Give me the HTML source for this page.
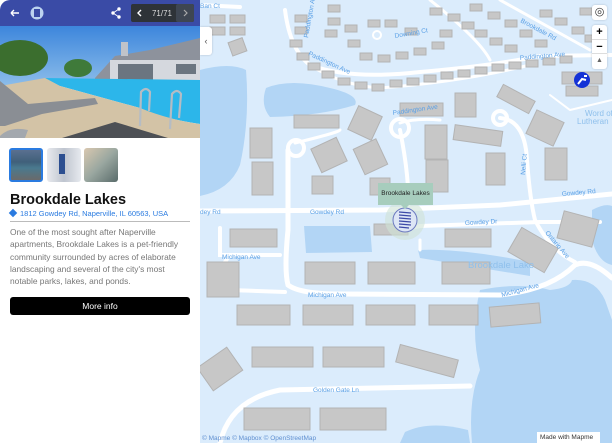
<!DOCTYPE html>
<html><head><meta charset="utf-8"><style>
*{margin:0;padding:0;box-sizing:border-box}
body{width:612px;height:443px;overflow:hidden;font-family:"Liberation Sans",sans-serif;background:#fff;position:relative}
#panel{position:absolute;left:0;top:0;width:200px;height:443px;background:#fff;z-index:2}
#hdr{position:absolute;left:0;top:0;width:200px;height:26px;background:#3a4ba6;border-top-left-radius:10px}
#photo{position:absolute;left:0;top:26px;width:200px;height:112px;overflow:hidden}
.th{position:absolute;top:148px;width:34px;height:34px;border-radius:3px;overflow:hidden}
h1{position:absolute;left:10px;top:192px;font-size:14.5px;font-weight:bold;color:#111}
#addr{position:absolute;left:10px;top:209px;font-size:7.5px;color:#2a7be0}
#rule{position:absolute;left:10px;top:221px;width:180px;height:1px;background:#bbb}
#desc{position:absolute;left:10px;top:226px;width:190px;font-size:8.4px;line-height:12.3px;color:#777;white-space:nowrap}
#btn{position:absolute;left:10px;top:297px;width:180px;height:18px;background:#000;border-radius:3px;color:#fff;font-size:8.5px;text-align:center;line-height:18px}
#map{position:absolute;left:200px;top:0;width:412px;height:443px;background:#dbecfc;overflow:hidden}
.ctl{position:absolute;background:#fff;border-radius:3px;box-shadow:0 0 2px rgba(0,0,0,.2)}
</style></head><body>
<div id="map">
<svg width="412" height="443" viewBox="0 0 412 443" style="position:absolute;left:0;top:0">
<g fill="#b2d5f5">
<path d="M0 70 Q30 62 46 70 Q50 120 40 165 Q30 190 0 196Z"/>
<path d="M66 88 Q90 78 130 88 Q160 95 155 105 Q120 116 70 117 Q60 105 66 88Z"/>
<path d="M104 226 L170 226 L172 252 L106 253Z"/>
<path d="M218 250 Q260 248 330 262 L330 276 L220 258Z"/>
<path d="M280 290 Q320 282 350 290 Q370 288 372 280 Q395 278 405 300 L412 320 L412 443 L272 443 Q268 400 280 370 Q270 330 280 290Z"/>
<path d="M392 210 Q405 203 412 206 L412 265 Q398 262 392 240Z"/>
<path d="M205 432 Q230 420 268 430 L270 443 L200 443Z"/>
</g>
<g fill="none" stroke="#fff" stroke-linecap="round">
<path d="M0 211 L180 210 L300 205 L412 194" stroke-width="5"/>
<path d="M88 150 Q88 180 88 230 Q84 270 88 285 Q100 294 140 294 L300 295 Q350 290 375 265 Q390 258 412 278" stroke-width="5"/>
<path d="M20 228 L20 255 L80 255" stroke-width="4"/>
<path d="M30 255 Q15 272 30 290 L85 292" stroke-width="4"/>
<path d="M95 143 Q140 132 140 130" stroke-width="3"/>
<path d="M200 230 L220 226 L340 222 L400 222" stroke-width="4"/>
<path d="M300 118 Q325 120 327 160 Q330 200 335 220 Q350 250 375 262" stroke-width="4"/>
<path d="M200 130 Q210 180 208 210" stroke-width="4"/>
<path d="M200 123 Q215 118 240 120" stroke-width="3"/>
<path d="M20 443 Q30 400 80 390 L270 386" stroke-width="5"/>
<path d="M0 5 L40 7" stroke-width="4"/>
<path d="M85 10 Q90 50 110 65 Q150 80 220 72 Q290 66 340 56 L412 55" stroke-width="4"/>
<path d="M110 65 Q140 85 180 88 Q260 82 330 65" stroke-width="3"/>
<path d="M230 0 Q280 40 290 60" stroke-width="3"/>
<path d="M300 0 L390 50" stroke-width="3"/>
<path d="M350 95 L370 110 L412 100" stroke-width="2"/>
<path d="M220 240 L220 250" stroke-width="3"/>
</g>
<g fill="none" stroke="#fff" stroke-width="4"><circle cx="96" cy="148" r="8"/><circle cx="200" cy="128" r="9"/><circle cx="300" cy="118" r="7"/><circle cx="177" cy="35" r="4" stroke-width="2"/></g>
<g fill="#c7c7c7" stroke="#b3b3b3" stroke-width="1">
<rect x="37" y="305" width="53" height="20"/><rect x="103" y="305" width="50" height="20"/><rect x="166" y="305" width="49" height="20"/><rect x="229" y="305" width="49" height="20"/><rect x="290" y="305" width="50" height="20" transform="rotate(-5 315 315)"/>
<rect x="30" y="229" width="47" height="18"/><rect x="245" y="229" width="46" height="18"/><rect x="174" y="224" width="34" height="11"/>
<rect x="105" y="262" width="50" height="22"/><rect x="168" y="262" width="47" height="22"/><rect x="242" y="262" width="48" height="22"/>
<rect x="52" y="347" width="61" height="20"/><rect x="123" y="347" width="61" height="20"/><rect x="197" y="352" width="60" height="18" transform="rotate(15 227 361)"/>
<rect x="44" y="408" width="66" height="22"/><rect x="120" y="408" width="66" height="22"/>
<rect x="7" y="262" width="32" height="35"/>
<rect x="2" y="355" width="36" height="28" transform="rotate(-35 20 369)"/>
<rect x="94" y="115" width="45" height="13"/><rect x="152" y="110" width="26" height="26" transform="rotate(25 165 123)"/>
<rect x="200" y="103" width="43" height="13"/><rect x="255" y="93" width="21" height="24"/><rect x="298" y="92" width="36" height="14" transform="rotate(28 316 99)"/>
<rect x="254" y="128" width="48" height="15" transform="rotate(8 278 135)"/>
<rect x="50" y="128" width="22" height="30"/><rect x="52" y="162" width="21" height="33"/>
<rect x="115" y="142" width="28" height="26" transform="rotate(-25 129 155)"/><rect x="158" y="143" width="25" height="28" transform="rotate(-25 170 157)"/>
<rect x="112" y="176" width="21" height="18"/><rect x="170" y="178" width="20" height="17"/>
<rect x="225" y="125" width="22" height="34"/><rect x="226" y="160" width="22" height="32"/><rect x="286" y="153" width="19" height="32"/>
<rect x="330" y="115" width="30" height="26" transform="rotate(25 345 128)"/><rect x="345" y="148" width="22" height="32"/>
<rect x="360" y="215" width="36" height="28" transform="rotate(15 378 229)"/><rect x="312" y="236" width="42" height="28" transform="rotate(30 333 250)"/>
<rect x="95" y="15" width="12" height="7"/><rect x="95" y="27" width="12" height="7"/><rect x="90" y="40" width="12" height="7"/><rect x="97" y="53" width="12" height="7"/><rect x="108" y="63" width="12" height="7"/><rect x="122" y="71" width="12" height="7"/><rect x="138" y="78" width="12" height="7"/><rect x="155" y="82" width="12" height="7"/><rect x="172" y="84" width="12" height="7"/>
<rect x="190" y="80" width="12" height="7"/><rect x="207" y="78" width="12" height="7"/><rect x="224" y="75" width="12" height="7"/><rect x="241" y="72" width="12" height="7"/><rect x="258" y="70" width="12" height="7"/><rect x="275" y="67" width="12" height="7"/><rect x="292" y="64" width="12" height="7"/><rect x="309" y="62" width="12" height="7"/><rect x="326" y="60" width="12" height="7"/><rect x="343" y="58" width="12" height="7"/><rect x="360" y="56" width="12" height="7"/>
<rect x="128" y="5" width="12" height="7"/><rect x="128" y="18" width="12" height="7"/><rect x="125" y="30" width="12" height="7"/><rect x="145" y="25" width="12" height="7"/><rect x="148" y="40" width="12" height="7"/><rect x="160" y="53" width="12" height="7"/><rect x="178" y="55" width="12" height="7"/><rect x="196" y="52" width="12" height="7"/><rect x="214" y="48" width="12" height="7"/><rect x="232" y="42" width="12" height="7"/><rect x="240" y="30" width="12" height="7"/><rect x="168" y="20" width="12" height="7"/><rect x="185" y="20" width="12" height="7"/><rect x="205" y="28" width="12" height="7"/>
<rect x="230" y="8" width="12" height="7"/><rect x="248" y="14" width="12" height="7"/><rect x="262" y="22" width="12" height="7"/><rect x="275" y="30" width="12" height="7"/><rect x="290" y="38" width="12" height="7"/><rect x="305" y="45" width="12" height="7"/><rect x="270" y="4" width="12" height="7"/><rect x="288" y="12" width="12" height="7"/><rect x="305" y="20" width="12" height="7"/><rect x="320" y="30" width="12" height="7"/><rect x="335" y="40" width="12" height="7"/>
<rect x="340" y="10" width="12" height="7"/><rect x="355" y="18" width="12" height="7"/><rect x="372" y="27" width="12" height="7"/><rect x="385" y="35" width="12" height="7"/><rect x="380" y="8" width="12" height="7"/>
<rect x="10" y="15" width="15" height="8"/><rect x="30" y="15" width="15" height="8"/><rect x="30" y="27" width="15" height="8"/><rect x="10" y="27" width="15" height="8"/><rect x="30" y="40" width="15" height="14" transform="rotate(-20 37 47)"/>
<rect x="362" y="72" width="40" height="12"/><rect x="366" y="86" width="32" height="10"/>
</g>
<g font-family="Liberation Sans" font-size="6.5" fill="#5aa0e6">
<text x="110" y="214">Gowdey Rd</text><text x="0" y="214">dey Rd</text><text x="362" y="196" transform="rotate(-5 362 196)">Gowdey Rd</text>
<text x="265" y="225" transform="rotate(-3 265 225)">Gowdey Dr</text>
<text x="22" y="259">Michigan Ave</text><text x="108" y="297">Michigan Ave</text><text x="302" y="297" transform="rotate(-15 302 297)">Michigan Ave</text>
<text x="113" y="392">Golden Gate Ln</text><text x="193" y="115" transform="rotate(-8 193 115)">Paddington Ave</text>
<text x="320" y="60" transform="rotate(-5 320 60)">Paddington Ave</text><text x="195" y="38" transform="rotate(-10 195 38)">Downing Ct</text>
<text x="320" y="22" transform="rotate(28 320 22)">Brookdale Rd</text><text x="108" y="55" transform="rotate(25 108 55)">Paddington Ave</text>
<text x="108" y="38" transform="rotate(-80 108 38)">Paddington Ave</text>
<text x="345" y="233" transform="rotate(50 345 233)">Ontario Ave</text><text x="325" y="175" transform="rotate(-85 325 175)">Nelli Ct</text>
<text x="0" y="8">Ban Ct</text>
<text x="268" y="268" font-size="9.5" fill="#8fc0ec">Brookdale Lake</text>
<text x="385" y="116" font-size="8" fill="#8fc0ec">Word of</text><text x="377" y="124" font-size="8" fill="#8fc0ec">Lutheran</text>
</g>
<circle cx="205" cy="220" r="20" fill="#cfe3d6" opacity=".6"/>
<circle cx="205" cy="220" r="12" fill="#dde6f5" stroke="#6c7ac0" stroke-width="1"/>
<g stroke="#3d4aa8" stroke-width="1.3"><path d="M199 212 L211 213 M199 215 L211 216 M199 218 L211 219 M199 221 L211 222 M199 224 L211 225 M199 227 L209 228"/></g>
<rect x="178" y="183" width="55" height="22" fill="#a7cdbd"/><path d="M201 205 L205 209 L209 205Z" fill="#a7cdbd"/>
<text x="205.5" y="195" font-family="Liberation Sans" font-size="6.5" fill="#222" text-anchor="middle">Brookdale Lakes</text>
<circle cx="382" cy="80" r="8" fill="#1432d6"/><path d="M378 84 L382 79 L386 80 M384 76 L387 76" stroke="#fff" stroke-width="2" fill="none"/>
</svg>
<div class="ctl" style="left:0;top:27px;width:12px;height:28px;border-radius:0 3px 3px 0;font-size:9px;color:#555;text-align:center;line-height:28px">‹</div>
<div class="ctl" style="left:392px;top:5px;width:15px;height:15px;text-align:center;font-size:11px;line-height:15px;color:#333">◎</div>
<div class="ctl" style="left:392px;top:25px;width:15px;height:44px">
<div style="height:14px;text-align:center;font-size:11px;font-weight:bold;line-height:14px">+</div>
<div style="height:14px;text-align:center;font-size:11px;font-weight:bold;line-height:14px;border-top:1px solid #ddd">−</div>
<div style="height:14px;text-align:center;font-size:7px;line-height:14px;border-top:1px solid #ddd;color:#666">▲</div></div>
<div style="position:absolute;left:2px;top:435px;font-size:6.5px;color:#5f8fd0">© Mapme © Mapbox © OpenStreetMap</div>
<div style="position:absolute;left:337px;top:432px;width:63px;height:11px;background:#fff;font-size:6.5px;color:#333;line-height:11px;padding-left:3px">Made with Mapme <span style="display:inline-block;width:7px;height:7px;border-radius:50%;background:#45a6f0;vertical-align:-1px"></span></div>
</div>
<div id="panel">
<div id="hdr">
<svg width="200" height="26" style="position:absolute;left:0;top:0">
<path d="M11 13 H19 M11 13 L14 10 M11 13 L14 16" stroke="#fff" stroke-width="1.4" fill="none"/>
<circle cx="37" cy="13" r="6.5" fill="#bcd3f0"/><rect x="34" y="9" width="6" height="8" fill="#3a4ba6"/>
<g fill="#fff"><circle cx="119" cy="9" r="1.7"/><circle cx="113" cy="13" r="1.7"/><circle cx="119" cy="17" r="1.7"/></g>
<path d="M119 9 L113 13 L119 17" stroke="#fff" stroke-width=".9" fill="none"/>
<rect x="131" y="4" width="63" height="18" rx="2" fill="#2e3338"/><rect x="176" y="4" width="18" height="18" rx="2" fill="#3e4652"/>
<path d="M141 10 L138 13 L141 16" stroke="#fff" stroke-width="1.4" fill="none"/>
<path d="M184 10 L187 13 L184 16" stroke="#aaa" stroke-width="1.2" fill="none"/>
<text x="162" y="16" fill="#ddd" font-size="8" font-family="Liberation Sans" text-anchor="middle">71/71</text>
</svg></div>
<div id="photo">
<svg width="200" height="112">
<defs><linearGradient id="sk" x1="0" y1="0" x2="0" y2="1"><stop offset="0" stop-color="#3d86dc"/><stop offset="1" stop-color="#8cbdea"/></linearGradient></defs>
<rect x="0" y="0" width="200" height="60" fill="url(#sk)"/>
<ellipse cx="20" cy="32" rx="28" ry="18" fill="#3b6e2e"/><ellipse cx="78" cy="42" rx="14" ry="9" fill="#3f7a3a"/>
<path d="M95 52 L115 30 L150 24 L200 12 L200 60 L95 60Z" fill="#8d929c"/><rect x="110" y="34" width="90" height="28" fill="#d5d8de"/>
<rect x="121" y="16" width="7" height="14" fill="#c0c3c9"/>
<rect x="118" y="38" width="35" height="16" fill="#6b7580"/><rect x="176" y="38" width="20" height="10" fill="#6b7580"/>
<path d="M45 52 L200 54 L200 98 Q160 92 140 82 L60 60Z" fill="#2cb6ea"/>
<path d="M0 60 L45 52 L60 60 L140 82 Q170 94 200 98 L200 112 L0 112Z" fill="#d3c3a6"/>
<path d="M0 55 L28 78 L95 72 L98 78 L42 88 L5 100 L0 100Z" fill="#8a8e94"/>
<path d="M0 110 Q10 100 28 104 L25 112 L0 112Z" fill="#a3a8ae"/><path d="M62 112 L115 96 L168 112Z" fill="#4d5055"/>
<path d="M140 100 L141 66 Q146 60 150 66 L149 85" stroke="#b5bcc4" stroke-width="2.2" fill="none"/><path d="M170 103 L172 68 Q177 62 181 68 L179 92" stroke="#b5bcc4" stroke-width="2.2" fill="none"/>
</svg></div>
<div class="th" style="left:9px;border:2px solid #2a7be0;background:linear-gradient(#5a7090 0%,#40607a 40%,#4a7a8f 60%,#6a6a6a 100%)"></div>
<div class="th" style="left:47px;background:linear-gradient(90deg,#e8eaee,#bfc5cf 50%,#e6e9ee)"><div style="position:absolute;left:12px;top:6px;width:6px;height:20px;background:#2c4e90"></div></div>
<div class="th" style="left:84px;background:linear-gradient(135deg,#d9c8b0,#9aa7a0 50%,#596b6a)"></div>
<h1>Brookdale Lakes</h1>
<div id="addr"><span style="display:inline-block;width:6px;height:6px;background:#2a7be0;transform:rotate(45deg);margin-right:4px"></span>1812 Gowdey Rd, Naperville, IL 60563, USA</div>
<div id="rule"></div>
<div id="desc">One of the most sought after Naperville<br>apartments, Brookdale Lakes is a pet-friendly<br>community surrounded by acres of elaborate<br>landscaping and several of the city's most<br>notable parks, lakes, and ponds.</div>
<div id="btn">More info</div>
</div>
</body></html>
